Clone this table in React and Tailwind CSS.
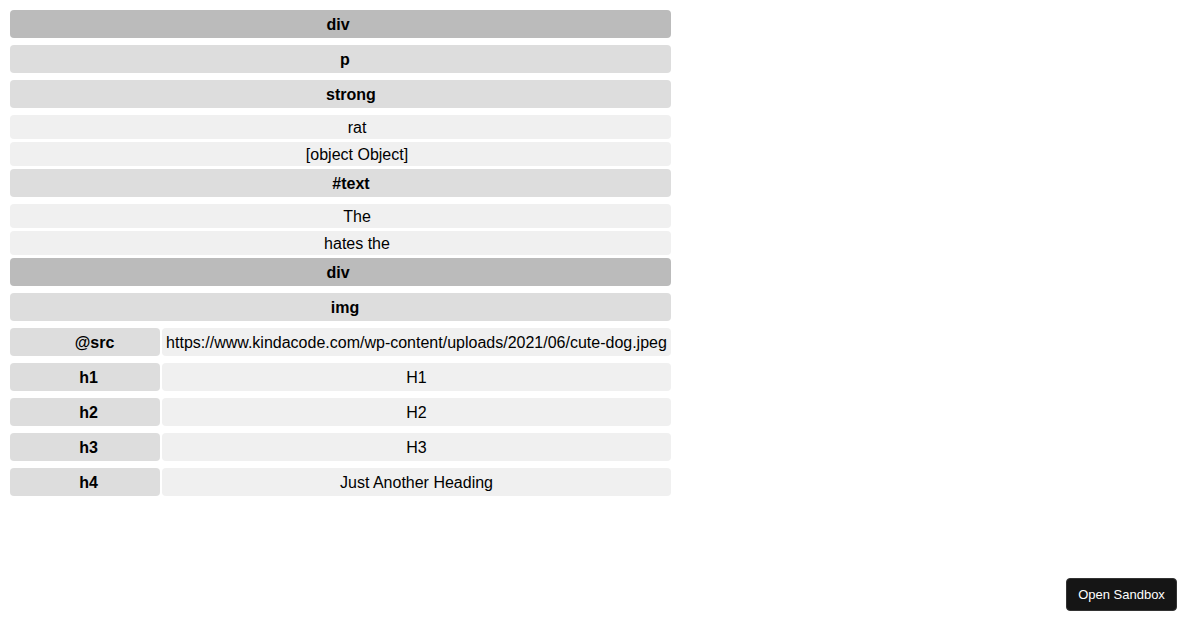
const Head = ({ children, dark, pad }) => (
    <div className={`h-[28px] mb-[7px] pt-[2px] flex items-center justify-center rounded-[4px] font-bold ${pad} ${dark ? "bg-[#bbbbbb]" : "bg-[#dddddd]"}`}>
        {children}
    </div>
)

const Text = ({ children }) => (
    <div className="h-[24px] mb-[3px] pt-[2px] pl-[33px] flex items-center justify-center rounded-[4px] bg-[#f0f0f0]">
        {children}
    </div>
)

const Attr = ({ name, value, pad }) => (
    <div className="h-[28px] mb-[7px] flex gap-[2px]">
        <div className={`w-[150px] pt-[2px] flex items-center justify-center rounded-[4px] bg-[#dddddd] font-bold ${pad}`}>
            {name}
        </div>
        <div className="flex-1 pt-[2px] flex items-center justify-center rounded-[4px] bg-[#f0f0f0] whitespace-nowrap">
            {value}
        </div>
    </div>
)

const App = () => {
    return (
        <div className="min-h-[630px] bg-white text-[16px] text-black font-['Liberation_Sans',Arial,sans-serif]">
            <div className="w-[661px] ml-[10px] pt-[10px]">
                <Head dark pad="pr-[5px]">div</Head>
                <Head pad="pl-[9px]">p</Head>
                <Head pad="pl-[21px]">strong</Head>
                <Text>rat</Text>
                <Text>[object Object]</Text>
                <Head pad="pl-[21px]">#text</Head>
                <Text>The</Text>
                <Text>hates the</Text>
                <Head dark pad="pr-[5px]">div</Head>
                <Head pad="pl-[9px]">img</Head>
                <Attr name="@src" pad="pl-[19px]" value="https://www.kindacode.com/wp-content/uploads/2021/06/cute-dog.jpeg" />
                <Attr name="h1" pad="pl-[7px]" value="H1" />
                <Attr name="h2" pad="pl-[7px]" value="H2" />
                <Attr name="h3" pad="pl-[7px]" value="H3" />
                <Attr name="h4" pad="pl-[7px]" value="Just Another Heading" />
            </div>
            <button className="fixed right-[23px] bottom-[19px] w-[111px] h-[33px] rounded-[4px] bg-[#151515] text-white text-[13px] font-['Liberation_Sans',Arial,sans-serif] border border-[#333]">
                Open Sandbox
            </button>
        </div>
    )
}

export default App
